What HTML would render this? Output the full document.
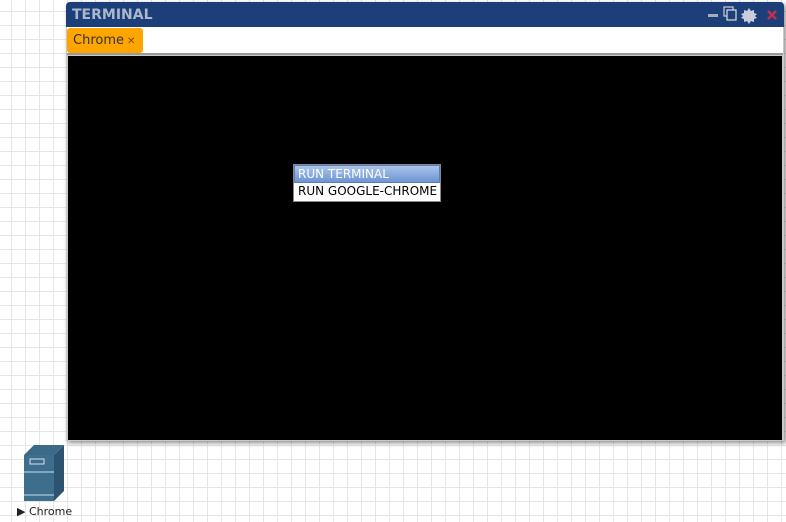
<!DOCTYPE html>
<html><head><style>
body{margin:0;width:786px;height:522px;overflow:hidden;position:relative;font-family:"Liberation Sans","DejaVu Sans",sans-serif;
background-color:#fff;background-image:linear-gradient(#e6e6e6 1px,transparent 1px),linear-gradient(90deg,#e6e6e6 1px,transparent 1px);background-size:14px 14px;background-position:-3px -3px;}
.win{position:absolute;left:66px;top:2px;width:718px;height:439px;background:#c8c8c8;border-radius:4px 4px 0 0;box-shadow:2px 2px 5px rgba(0,0,0,.45);}
.tb{position:absolute;left:0;top:0;width:718px;height:25px;background:#1c3f7a;border-radius:4px 4px 0 0}
.title{position:absolute;left:6px;top:5px;color:#aab7cc;font-weight:bold;font-size:14px;font-family:"DejaVu Sans",sans-serif}
.tabs{position:absolute;left:1px;top:25px;width:716px;height:26px;background:#fff;border-bottom:2px solid #999;}
.tab{position:absolute;left:0;top:1px;width:76px;height:25px;background:#ffa500;border-radius:3px;font-size:13px;color:#333;line-height:25px;padding-left:6px;box-sizing:border-box;font-family:"DejaVu Sans",sans-serif}
.tab span{font-size:10px;color:#7a4a00;font-weight:bold;margin-left:3px}
.term{position:absolute;left:2px;top:54px;width:714px;height:384px;background:#000;}
.menu{position:absolute;left:225px;top:108px;width:146px;height:36px;background:#fff;border:1px solid #888;font-size:12px;font-family:"DejaVu Sans",sans-serif}
.menu div{height:17px;line-height:17px;padding-left:4px}
.menu .sel{background:linear-gradient(#a9c4ea,#6d95d2);color:#fff;border:1px solid #5a7fb8;height:16px;line-height:16px;padding-left:3px}
</style></head><body>
<div class="win">
<div class="tb"></div>
<div class="title">TERMINAL</div>
<svg style="position:absolute;left:640px;top:3px" width="76" height="20">
<rect x="2" y="9" width="10" height="3" fill="#aab"/>
<rect x="18" y="2" width="9" height="9" fill="none" stroke="#ccd" stroke-width="1.2"/>
<rect x="21" y="5" width="9" height="10" fill="#1c3f7a" stroke="#ddd" stroke-width="1.2"/>
<polygon points="43,3 45,6 48,5 48,8 51,9 49,11 51,13 48,14 48,17 45,16 43,19 41,16 38,17 38,14 35,13 37,11 35,9 38,8 38,5 41,6" fill="#ccd"/>
<path d="M62 6 L70 14 M70 6 L62 14" stroke="#c0304a" stroke-width="2.5"/>
</svg>
<div class="tabs"><div class="tab">Chrome<span>✕</span></div></div>
<div class="term"><div class="menu"><div class="sel">RUN TERMINAL</div><div>RUN GOOGLE-CHROME</div></div></div>
</div>
<svg style="position:absolute;left:22px;top:443px" width="48" height="60">
<polygon points="2,12 12,2 42,2 32,12" fill="#3a6a88"/>
<polygon points="32,12 42,2 42,48 32,58" fill="#2c5470"/>
<rect x="2" y="12" width="30" height="46" fill="#3d6e8c"/>
<rect x="8" y="16" width="14" height="5" fill="none" stroke="#dde" stroke-width="1"/>
<line x1="2" y1="29" x2="32" y2="29" stroke="#cde" stroke-width="1"/>
<line x1="2" y1="52" x2="32" y2="52" stroke="#cde" stroke-width="1"/>
</svg>
<div style="position:absolute;left:17px;top:505px;font-size:11px;color:#222;font-family:'DejaVu Sans',sans-serif">▶ Chrome</div>
</body></html>
